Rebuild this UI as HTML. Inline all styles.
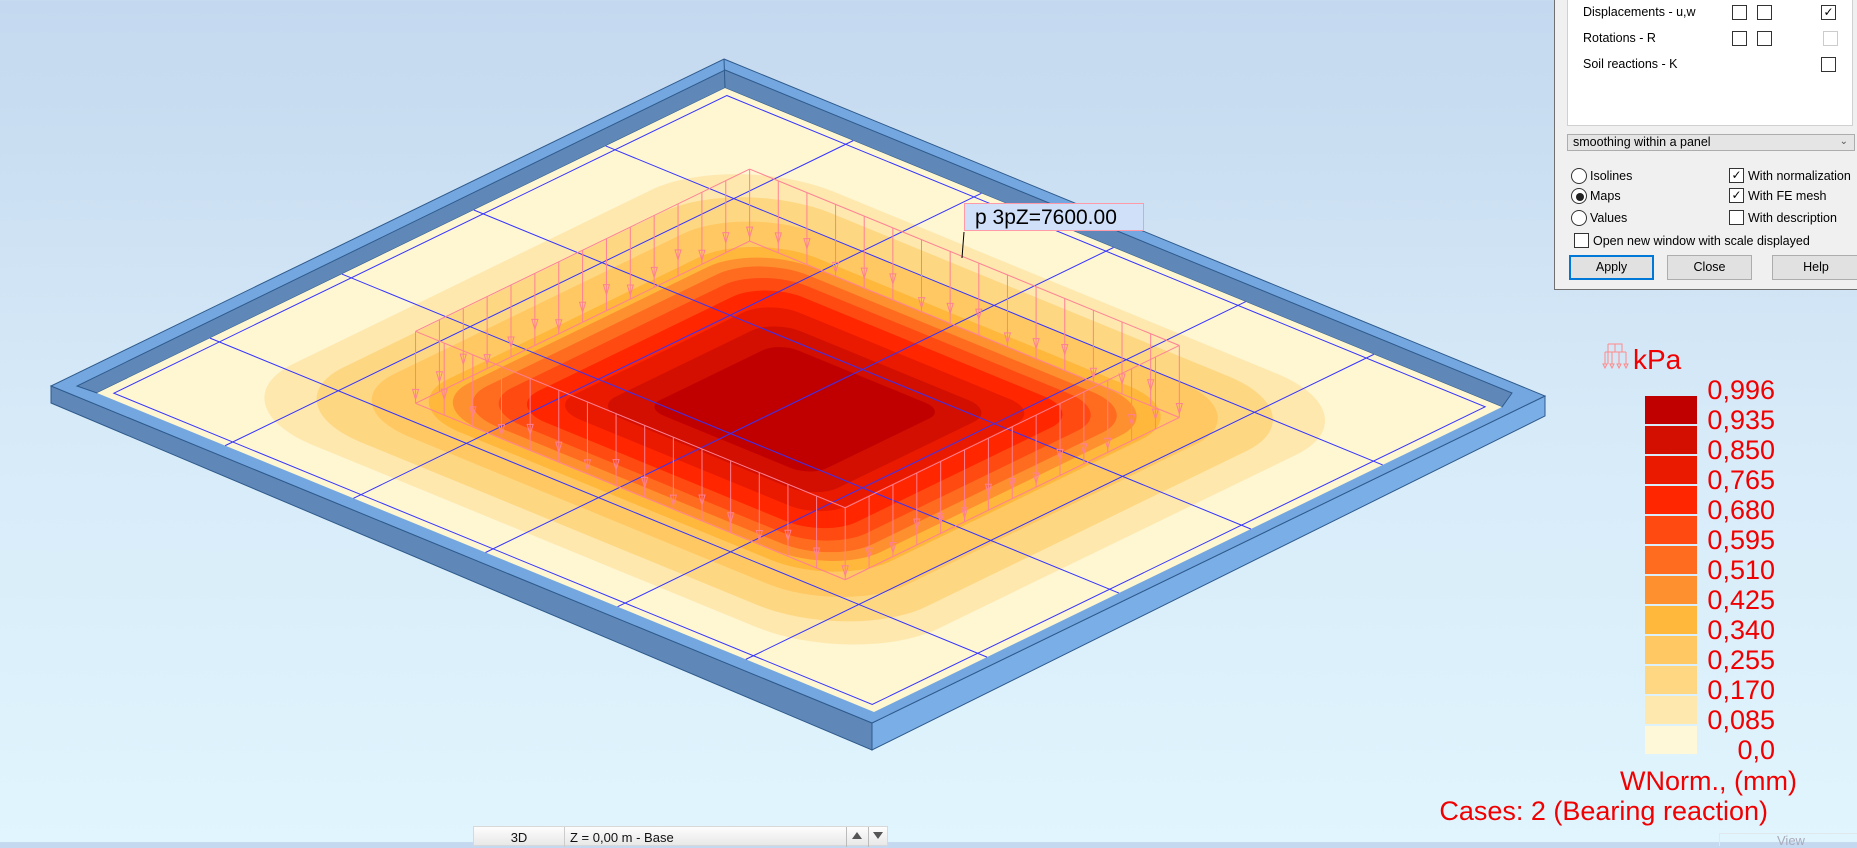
<!DOCTYPE html>
<html><head><meta charset="utf-8"><style>
html,body{margin:0;padding:0}
body{width:1857px;height:842px;overflow:hidden;position:relative;background:linear-gradient(#c4d8ef,#d6eaf8 50%,#e1f5fe);font-family:"Liberation Sans",Arial,sans-serif}
.abs{position:absolute}
.dlg{left:1554px;top:-2px;width:303px;height:292px;background:#f0f0f0;border-left:1px solid #707070;border-bottom:1px solid #707070;box-sizing:border-box;font-size:12.5px;color:#000}
.cb{position:absolute;width:13px;height:13px;border:1px solid #333;background:#fff}
.rd{position:absolute;width:14px;height:14px;border:1px solid #333;border-radius:50%;background:#fff}
.btn{position:absolute;top:257px;height:25px;background:#e1e1e1;border:1px solid #adadad;box-sizing:border-box;text-align:center;line-height:23px;font-size:12.5px}
.lg{position:absolute;left:1645px;width:52px;height:28px}
.lv{position:absolute;right:82px;font-size:27px;color:#f00000;line-height:30px}
</style></head><body>
<svg class="abs" style="left:0;top:0" width="1857" height="842" id="sv">
<polygon points="51,386 872,723 872,750 51,403" fill="#5f88b8" stroke="#2e5a8c" stroke-width="1"/>
<polygon points="872,723 1545,396 1545,416 872,750" fill="#7aaee6" stroke="#2e5a8c" stroke-width="1"/>
<polygon points="724,59 1545,396 872,723 51,386" fill="#74a7e0" stroke="#2e5a8c" stroke-width="1"/>
<polygon points="725,70 1512,393 1502,407 725,88 97,393 77,386" fill="#5f88b8" stroke="#2e5a8c" stroke-width="1"/>
<line x1="724" y1="59" x2="725" y2="88" stroke="#2e5a8c"/>
<g transform="matrix(777,319,-628,305,725,88)">
<rect x="0" y="0" width="1" height="1" fill="#fff6d2"/>
<g transform="translate(0.51,0.52)">
<rect x="-0.415" y="-0.415" width="0.83" height="0.83" rx="0.13" fill="#fee8ae"/>
<rect x="-0.375" y="-0.375" width="0.75" height="0.75" rx="0.12" fill="#fed783"/>
<rect x="-0.33" y="-0.33" width="0.66" height="0.66" rx="0.1" fill="#ffc862"/>
<rect x="-0.285" y="-0.285" width="0.57" height="0.57" rx="0.085" fill="#ffb73c"/>
<rect x="-0.265" y="-0.265" width="0.53" height="0.53" rx="0.075" fill="#ff9030"/>
<rect x="-0.248" y="-0.248" width="0.496" height="0.496" rx="0.065" fill="#ff6c20"/>
<rect x="-0.228" y="-0.228" width="0.456" height="0.456" rx="0.06" fill="#ff4a12"/>
<rect x="-0.205" y="-0.205" width="0.41" height="0.41" rx="0.05" fill="#ff2600"/>
<rect x="-0.175" y="-0.175" width="0.35" height="0.35" rx="0.04" fill="#ea1a00"/>
<rect x="-0.143" y="-0.143" width="0.286" height="0.286" rx="0.035" fill="#d20f00"/>
<rect x="-0.107" y="-0.107" width="0.214" height="0.214" rx="0.025" fill="#c00000"/>
</g>
<g stroke="#3333ff" stroke-width="1" fill="none">
<rect x="0.012" y="0.012" width="0.976" height="0.976" vector-effect="non-scaling-stroke"/>
<line x1="0.165" y1="0" x2="0.165" y2="1" vector-effect="non-scaling-stroke"/>
<line x1="0.33" y1="0" x2="0.33" y2="1" vector-effect="non-scaling-stroke"/>
<line x1="0.5" y1="0" x2="0.5" y2="1" vector-effect="non-scaling-stroke"/>
<line x1="0.67" y1="0" x2="0.67" y2="1" vector-effect="non-scaling-stroke"/>
<line x1="0.835" y1="0" x2="0.835" y2="1" vector-effect="non-scaling-stroke"/>
<line x1="0" y1="0.19" x2="1" y2="0.19" vector-effect="non-scaling-stroke"/>
<line x1="0" y1="0.40" x2="1" y2="0.40" vector-effect="non-scaling-stroke"/>
<line x1="0" y1="0.61" x2="1" y2="0.61" vector-effect="non-scaling-stroke"/>
<line x1="0" y1="0.82" x2="1" y2="0.82" vector-effect="non-scaling-stroke"/>
</g>
</g>
<g id="load" stroke="#ff8095" stroke-width="1" fill="none"></g>
<line x1="964" y1="232" x2="962" y2="258" stroke="#000"/>
<g stroke="#ff8a8a" fill="none" stroke-width="1">
<path d="M1608,344 H1622 V352 M1608,344 V364 M1615,344 V352 M1605,352 H1626 M1605,352 V364 M1612,352 V364 M1619,352 V364 M1626,352 V364"/>
<path d="M1603,364 l2,4 l2,-4z M1610,364 l2,4 l2,-4z M1617,364 l2,4 l2,-4z M1624,364 l2,4 l2,-4z"/>
</g>
</svg>
<div class="abs" style="left:964px;top:203px;width:180px;height:28px;background:#cfe0f8;border:1px solid #ff9aa8;box-sizing:border-box;font-size:21px;line-height:27px;padding-left:10px;color:#000">p 3pZ=7600.00</div>

<div class="abs dlg">
<div class="abs" style="left:12px;top:0;width:286px;height:128px;background:#fff;border:1px solid #d0d0d0;border-top:none;box-sizing:border-box"></div>
<div class="abs" style="left:28px;top:7px">Displacements - u,w</div>
<div class="cb" style="left:177px;top:7px"></div><div class="cb" style="left:202px;top:7px"></div>
<div class="cb" style="left:266px;top:7px;font-size:12px;line-height:12px;text-align:center">&#10003;</div>
<div class="abs" style="left:28px;top:33px">Rotations - R</div>
<div class="cb" style="left:177px;top:33px"></div><div class="cb" style="left:202px;top:33px"></div>
<div class="cb" style="left:268px;top:33px;border-color:#ccc"></div>
<div class="abs" style="left:28px;top:59px">Soil reactions - K</div>
<div class="cb" style="left:266px;top:59px"></div>
<div class="abs" style="left:12px;top:136px;height:15px;background:#e5e5e5;border:1px solid #adadad;font-size:12.5px;line-height:15px;padding-left:5px;width:281px">smoothing within a panel<span style="position:absolute;right:6px;top:-1px;color:#555;font-size:10px">&#8964;</span></div>
<div class="rd" style="left:16px;top:170px"></div><div class="abs" style="left:35px;top:171px">Isolines</div>
<div class="rd" style="left:16px;top:190px"></div><div class="abs" style="left:21px;top:195px;width:8px;height:8px;border-radius:50%;background:#222"></div><div class="abs" style="left:35px;top:191px">Maps</div>
<div class="rd" style="left:16px;top:212px"></div><div class="abs" style="left:35px;top:213px">Values</div>
<div class="cb" style="left:174px;top:170px;font-size:12px;line-height:13px;text-align:center">&#10003;</div><div class="abs" style="left:193px;top:171px">With normalization</div>
<div class="cb" style="left:174px;top:190px;font-size:12px;line-height:13px;text-align:center">&#10003;</div><div class="abs" style="left:193px;top:191px">With FE mesh</div>
<div class="cb" style="left:174px;top:212px"></div><div class="abs" style="left:193px;top:213px">With description</div>
<div class="cb" style="left:19px;top:235px"></div><div class="abs" style="left:38px;top:236px">Open new window with scale displayed</div>
<div class="btn" style="left:14px;width:85px;border:2px solid #0078d7;line-height:21px">Apply</div>
<div class="btn" style="left:112px;width:85px">Close</div>
<div class="btn" style="left:217px;width:88px">Help</div>
</div>

<div class="abs" style="left:1633px;top:344px;font-size:28px;color:#f00000;line-height:32px">kPa</div>
<div class="lg" style="top:396px;background:#c00000"></div>
<div class="lg" style="top:426px;background:#d20f00"></div>
<div class="lg" style="top:456px;background:#ea1a00"></div>
<div class="lg" style="top:486px;background:#ff2600"></div>
<div class="lg" style="top:516px;background:#ff4a12"></div>
<div class="lg" style="top:546px;background:#ff6c20"></div>
<div class="lg" style="top:576px;background:#ff9030"></div>
<div class="lg" style="top:606px;background:#ffb73c"></div>
<div class="lg" style="top:636px;background:#ffc862"></div>
<div class="lg" style="top:666px;background:#ffd783"></div>
<div class="lg" style="top:696px;background:#ffe8ae"></div>
<div class="lg" style="top:726px;background:#fff8d8"></div>
<div class="lv" style="top:375px">0,996</div>
<div class="lv" style="top:405px">0,935</div>
<div class="lv" style="top:435px">0,850</div>
<div class="lv" style="top:465px">0,765</div>
<div class="lv" style="top:495px">0,680</div>
<div class="lv" style="top:525px">0,595</div>
<div class="lv" style="top:555px">0,510</div>
<div class="lv" style="top:585px">0,425</div>
<div class="lv" style="top:615px">0,340</div>
<div class="lv" style="top:645px">0,255</div>
<div class="lv" style="top:675px">0,170</div>
<div class="lv" style="top:705px">0,085</div>
<div class="lv" style="top:735px">0,0</div>
<div class="lv" style="top:766px;right:60px">WNorm., (mm)</div>
<div class="lv" style="top:796px;right:89px">Cases: 2 (Bearing reaction)</div>

<div class="abs" style="left:473px;top:826px;width:415px;height:20px;background:linear-gradient(#fdfdfd,#e8e8e8);border:1px solid #d8d8d8;box-sizing:border-box;font-size:13px;color:#111">
<div class="abs" style="left:0;top:3px;width:90px;text-align:center">3D</div>
<div class="abs" style="left:90px;top:0;width:1px;height:20px;background:#ccc"></div>
<div class="abs" style="left:96px;top:3px">Z = 0,00 m - Base</div>
<div class="abs" style="left:372px;top:0;width:1px;height:20px;background:#bbb"></div>
<div class="abs" style="left:394px;top:0;width:1px;height:20px;background:#bbb"></div>
<div class="abs" style="left:378px;top:5px;width:0;height:0;border-left:5px solid transparent;border-right:5px solid transparent;border-bottom:7px solid #555"></div>
<div class="abs" style="left:399px;top:5px;width:0;height:0;border-left:5px solid transparent;border-right:5px solid transparent;border-top:7px solid #555"></div>
</div>
<div class="abs" style="left:1719px;top:833px;width:140px;height:12px;border-left:1px solid #e0e8ee;border-top:1px solid #e0e8ee"></div>
<div class="abs" style="left:1777px;top:833px;font-size:13px;color:#aab">View</div>

<script>
(function(){
var g=document.getElementById('load');var ns='http://www.w3.org/2000/svg';
function p(u,v){return [725+777*u-628*v,88+319*u+305*v];}
var u0=0.237,u1=0.79,v0=0.254,v1=0.786,H=72;
var c=[[u0,v0],[u1,v0],[u1,v1],[u0,v1]];
function ln(a,b){var l=document.createElementNS(ns,'line');l.setAttribute('x1',a[0]);l.setAttribute('y1',a[1]);l.setAttribute('x2',b[0]);l.setAttribute('y2',b[1]);g.appendChild(l);}
for(var i=0;i<4;i++){var a=p(c[i][0],c[i][1]),b=p(c[(i+1)%4][0],c[(i+1)%4][1]);ln(a,b);ln([a[0],a[1]-H],[b[0],b[1]-H]);}
for(var i=0;i<4;i++){var A=c[i],B=c[(i+1)%4];var n=(i%2==0)?15:14;
for(var k=0;k<n;k++){var t=k/n;var u=A[0]+(B[0]-A[0])*t,v=A[1]+(B[1]-A[1])*t;var q=p(u,v);
ln([q[0],q[1]-H],[q[0],q[1]]);
var pg=document.createElementNS(ns,'polygon');var y=q[1]-4-(k%3)*6;pg.setAttribute('points',(q[0]-3)+','+(y-10)+' '+(q[0]+3)+','+(y-10)+' '+q[0]+','+y);g.appendChild(pg);}}
})();
</script>
</body></html>
